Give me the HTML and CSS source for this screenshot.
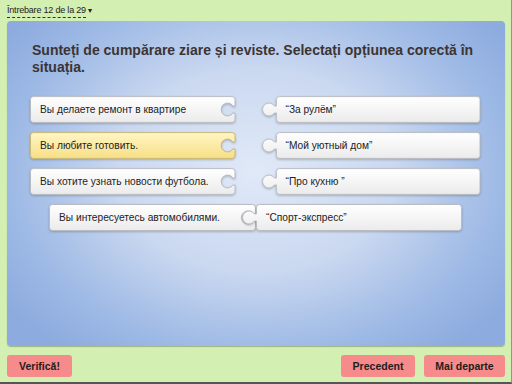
FILE: index.html
```html
<!DOCTYPE html>
<html lang="ro">
<head>
    <meta charset="UTF-8">
    <meta name="viewport" content="width=device-width, initial-scale=1.0">
    <title>Întrebare 12 de la 29</title>
    <link rel="stylesheet" href="styles.css">
</head>
<body>
    <svg class="defs" width="0" height="0">
        <defs>
            <linearGradient id="gradWhite" x1="0" y1="0" x2="0" y2="1">
                <stop offset="0" stop-color="#ffffff"/>
                <stop offset="1" stop-color="#ebebeb"/>
            </linearGradient>
            <linearGradient id="gradYellow" x1="0" y1="0" x2="0" y2="1">
                <stop offset="0" stop-color="#fff6c4"/>
                <stop offset="1" stop-color="#f7df86"/>
            </linearGradient>
        </defs>
    </svg>

    <div class="header">
        <span class="counter">Întrebare 12 de la 29</span><span class="caret">▾</span>
    </div>

    <div class="panel">
        <h1 class="question">Sunteți de cumpărare ziare și reviste. Selectați opțiunea corectă în situația.</h1>

        <div class="pairs">
            <div class="row">
                <div class="card left">
                    <svg class="shape" viewBox="0 0 207 27"><path d="M3.5 0.5H203.5Q206.5 0.5 206.5 3.5V10H204.5A6.5 6.5 0 1 0 204.5 17H206.5V23.5Q206.5 26.5 203.5 26.5H3.5Q0.5 26.5 0.5 23.5V3.5Q0.5 0.5 3.5 0.5Z"/></svg>
                    <span>Вы делаете ремонт в квартире</span>
                </div>
                <div class="card right">
                    <svg class="shape" viewBox="0 0 220 27"><path d="M17.5 0.5H216.5Q219.5 0.5 219.5 3.5V23.5Q219.5 26.5 216.5 26.5H17.5Q14.5 26.5 14.5 23.5V17H12.5A6.5 6.5 0 1 1 12.5 10H14.5V3.5Q14.5 0.5 17.5 0.5Z"/></svg>
                    <span>“За рулём”</span>
                </div>
            </div>
            <div class="row">
                <div class="card left selected">
                    <svg class="shape" viewBox="0 0 207 27"><path d="M3.5 0.5H203.5Q206.5 0.5 206.5 3.5V10H204.5A6.5 6.5 0 1 0 204.5 17H206.5V23.5Q206.5 26.5 203.5 26.5H3.5Q0.5 26.5 0.5 23.5V3.5Q0.5 0.5 3.5 0.5Z"/></svg>
                    <span>Вы любите готовить.</span>
                </div>
                <div class="card right">
                    <svg class="shape" viewBox="0 0 220 27"><path d="M17.5 0.5H216.5Q219.5 0.5 219.5 3.5V23.5Q219.5 26.5 216.5 26.5H17.5Q14.5 26.5 14.5 23.5V17H12.5A6.5 6.5 0 1 1 12.5 10H14.5V3.5Q14.5 0.5 17.5 0.5Z"/></svg>
                    <span>“Мой уютный дом”</span>
                </div>
            </div>
            <div class="row">
                <div class="card left">
                    <svg class="shape" viewBox="0 0 207 27"><path d="M3.5 0.5H203.5Q206.5 0.5 206.5 3.5V10H204.5A6.5 6.5 0 1 0 204.5 17H206.5V23.5Q206.5 26.5 203.5 26.5H3.5Q0.5 26.5 0.5 23.5V3.5Q0.5 0.5 3.5 0.5Z"/></svg>
                    <span>Вы хотите узнать новости футбола.</span>
                </div>
                <div class="card right">
                    <svg class="shape" viewBox="0 0 220 27"><path d="M17.5 0.5H216.5Q219.5 0.5 219.5 3.5V23.5Q219.5 26.5 216.5 26.5H17.5Q14.5 26.5 14.5 23.5V17H12.5A6.5 6.5 0 1 1 12.5 10H14.5V3.5Q14.5 0.5 17.5 0.5Z"/></svg>
                    <span>“Про кухню ”</span>
                </div>
            </div>
            <div class="row joined">
                <div class="card left">
                    <svg class="shape" viewBox="0 0 207 27"><path d="M3.5 0.5H203.5Q206.5 0.5 206.5 3.5V10H204.5A6.5 6.5 0 1 0 204.5 17H206.5V23.5Q206.5 26.5 203.5 26.5H3.5Q0.5 26.5 0.5 23.5V3.5Q0.5 0.5 3.5 0.5Z"/></svg>
                    <span>Вы интересуетесь автомобилями.</span>
                </div>
                <div class="card right">
                    <svg class="shape" viewBox="0 0 220 27"><path d="M17.5 0.5H216.5Q219.5 0.5 219.5 3.5V23.5Q219.5 26.5 216.5 26.5H17.5Q14.5 26.5 14.5 23.5V17H12.5A6.5 6.5 0 1 1 12.5 10H14.5V3.5Q14.5 0.5 17.5 0.5Z"/></svg>
                    <span>“Спорт-экспресс”</span>
                </div>
            </div>
        </div>
    </div>

    <div class="footer">
        <button class="btn check">Verifică!</button>
        <button class="btn prev">Precedent</button>
        <button class="btn next">Mai departe</button>
    </div>
</body>
</html>
```

FILE: styles.css
```css
html, body {
    margin: 0;
}
body {
    width: 512px;
    height: 384px;
    box-sizing: border-box;
    padding: 0 6px 0 7px;
    background: #d3efb2;
    border-right: 1px solid #8c9c80;
    border-bottom: 2px solid #555;
    font-family: "Liberation Sans", Arial, sans-serif;
    overflow: hidden;
}
.defs {
    display: block;
    width: 0;
    height: 0;
    overflow: hidden;
}
.header {
    height: 21px;
    box-sizing: border-box;
    padding-top: 5px;
    font-size: 9px;
    line-height: 11px;
    letter-spacing: -0.2px;
    color: #222;
}
.counter {
    display: inline-block;
    border-bottom: 1px dashed #333;
    padding-bottom: 1px;
}
.caret {
    font-size: 8px;
    margin-left: 2px;
}
.panel {
    height: 325px;
    box-sizing: border-box;
    padding: 21px 25px 0 23px;
    border-radius: 4px;
    background: radial-gradient(ellipse 62% 70% at 50% 46%, #e0e9f7 0%, #cad8f0 45%, #9db9e5 80%, #8eabdf 100%);
    box-shadow: 0 1px 1px rgba(0, 0, 0, 0.25);
}
.question {
    margin: 0 0 20px 2px;
    font-size: 14px;
    line-height: 17px;
    font-weight: bold;
    color: #3b3434;
}
.pairs {
    display: flex;
    flex-direction: column;
    gap: 9px;
}
.row {
    display: flex;
    gap: 26px;
}
.row.joined {
    margin-left: 19px;
    gap: 0;
}
.row.joined .right {
    margin-left: -14px;
}
.card {
    position: relative;
    height: 27px;
    display: flex;
    align-items: center;
    font-size: 10.2px;
    color: #222;
}
.card .shape {
    position: absolute;
    left: 0;
    top: 0;
    width: 100%;
    height: 100%;
    overflow: visible;
    filter: drop-shadow(0 1px 1px rgba(0, 0, 0, 0.22));
}
.card .shape path {
    fill: url(#gradWhite);
    stroke: #b9bcc2;
    stroke-width: 1;
}
.card.selected .shape path {
    fill: url(#gradYellow);
    stroke: #c9b978;
}
.card span {
    position: relative;
    padding-left: 10px;
}
.card.left {
    width: 207px;
}
.card.right {
    width: 220px;
    padding-left: 14px;
    box-sizing: border-box;
}
.footer {
    display: flex;
    gap: 9px;
    margin-top: 9px;
}
.btn {
    height: 22px;
    padding: 0;
    border: none;
    border-radius: 3px;
    background: #f78a8a;
    font-family: "Liberation Sans", Arial, sans-serif;
    font-size: 10.5px;
    font-weight: bold;
    color: #1e1e1e;
    white-space: nowrap;
}
.check {
    width: 65px;
}
.prev {
    margin-left: auto;
    width: 74px;
}
.next {
    width: 81px;
}
```
